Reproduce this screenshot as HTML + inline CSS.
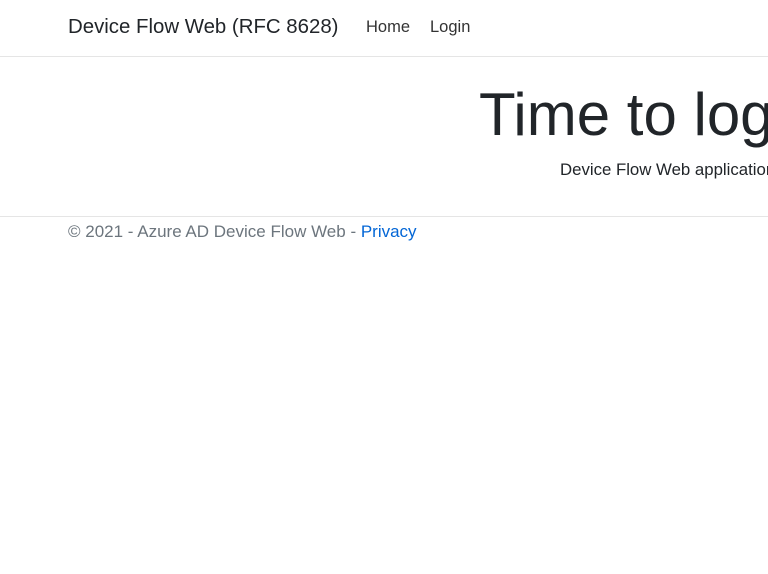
<!DOCTYPE html>
<html><head><meta charset="utf-8"><style>
html,body{margin:0;padding:0;background:#fff;width:768px;height:574px;overflow:hidden;font-family:"Liberation Sans",sans-serif;color:#212529}
.abs{position:absolute;white-space:nowrap}
.nav{position:absolute;left:0;top:0;width:768px;height:56px;border-bottom:1px solid #e5e5e5}
.foot{position:absolute;left:0;top:216px;width:768px;border-top:1px solid #e5e5e5}
</style></head><body>
<div class="nav"></div>
<div class="abs" style="left:68px;top:14px;font-size:20.4px;line-height:26px;color:#212529">Device Flow Web (RFC 8628)</div>
<div class="abs" style="left:366px;top:17px;font-size:16.5px;line-height:20px;color:#333">Home</div>
<div class="abs" style="left:430px;top:17px;font-size:16.5px;line-height:20px;color:#333">Login</div>
<div class="abs" style="left:479px;top:81px;font-size:60px;line-height:68px;color:#212529">Time to login</div>
<div class="abs" style="left:560px;top:160px;font-size:16.8px;line-height:20px">Device Flow Web application</div>
<div class="foot"></div>
<div class="abs" style="left:68px;top:222px;font-size:17px;line-height:20px;color:#6c757d">© 2021 - Azure AD Device Flow Web - <span style="color:#0366d6">Privacy</span></div>
</body></html>
